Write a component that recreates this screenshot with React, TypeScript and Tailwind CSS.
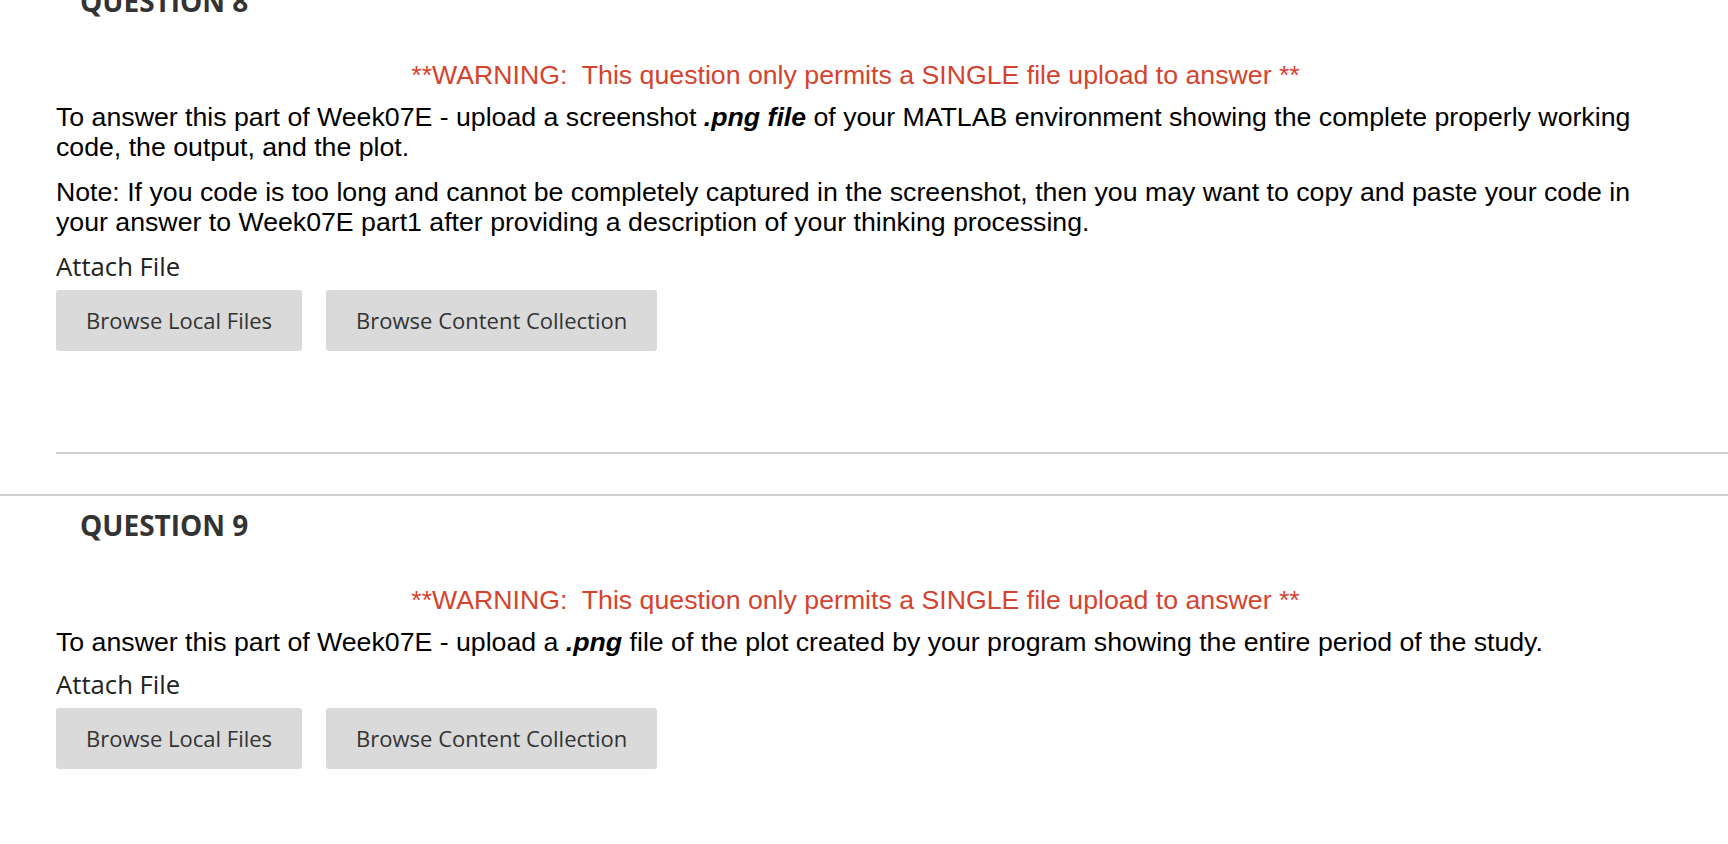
import React from 'react';

const Warning: React.FC = () => (
  <p className="text-center text-[#d5432e] text-[26.7px] leading-[30px] mb-[12px]">
    **WARNING:{'\u00a0'} This question only permits a SINGLE file upload to answer **
  </p>
);

const AttachFile: React.FC = () => (
  <div>
    <p className="font-['Open_Sans',sans-serif] text-[25.7px] leading-[30px] text-[#222] mb-[8px]">Attach File</p>
    <div className="flex gap-[24px] font-['Open_Sans',sans-serif]">
      <button className="h-[61px] px-[30px] rounded-[3px] bg-[#dadada] text-[#333] text-[22px]">
        Browse Local Files
      </button>
      <button className="h-[61px] px-[30px] rounded-[3px] bg-[#dadada] text-[#333] text-[22px]">
        Browse Content Collection
      </button>
    </div>
  </div>
);

const App: React.FC = () => {
  return (
    <div className="min-h-screen bg-white overflow-hidden font-['Liberation_Sans',Arial,sans-serif] text-black">
      {/* question 8, heading scrolled partly out of view */}
      <section className="-mt-[28px]">
        <h2 className="pl-[80px] pt-[11px] font-['Open_Sans',sans-serif] font-bold text-[28px] leading-[36px] text-[#333]">
          QUESTION 8
        </h2>
        <div className="ml-[56px] pt-[41px] pb-[101px] border-b-2 border-[#cfcfcf]">
          <div className="pr-[73px]">
            <Warning />
            <p className="text-[26.7px] leading-[30px] mb-[15px]">
              To answer this part of Week07E - upload a screenshot <b><i>.png file</i></b> of your MATLAB environment
              showing the complete properly working code, the output, and the plot.
            </p>
            <p className="text-[26.7px] leading-[30px] mb-[15px]">
              Note: If you code is too long and cannot be completely captured in the screenshot, then you may want to
              copy and paste your code in your answer to Week07E part1 after providing a description of your thinking
              processing.
            </p>
            <AttachFile />
          </div>
        </div>
      </section>

      <section className="mt-[40px] border-t-2 border-[#cfcfcf]">
        <h2 className="pl-[80px] pt-[11px] font-['Open_Sans',sans-serif] font-bold text-[28px] leading-[36px] text-[#333]">
          QUESTION 9
        </h2>
        <div className="ml-[56px] pt-[42px] pb-[80px]">
          <div className="pr-[73px]">
            <Warning />
            <p className="text-[26.7px] leading-[30px] mb-[13px]">
              To answer this part of Week07E - upload a <b><i>.png</i></b> file of the plot created by your program
              showing the entire period of the study.
            </p>
            <AttachFile />
          </div>
        </div>
      </section>
    </div>
  );
};

export default App;
